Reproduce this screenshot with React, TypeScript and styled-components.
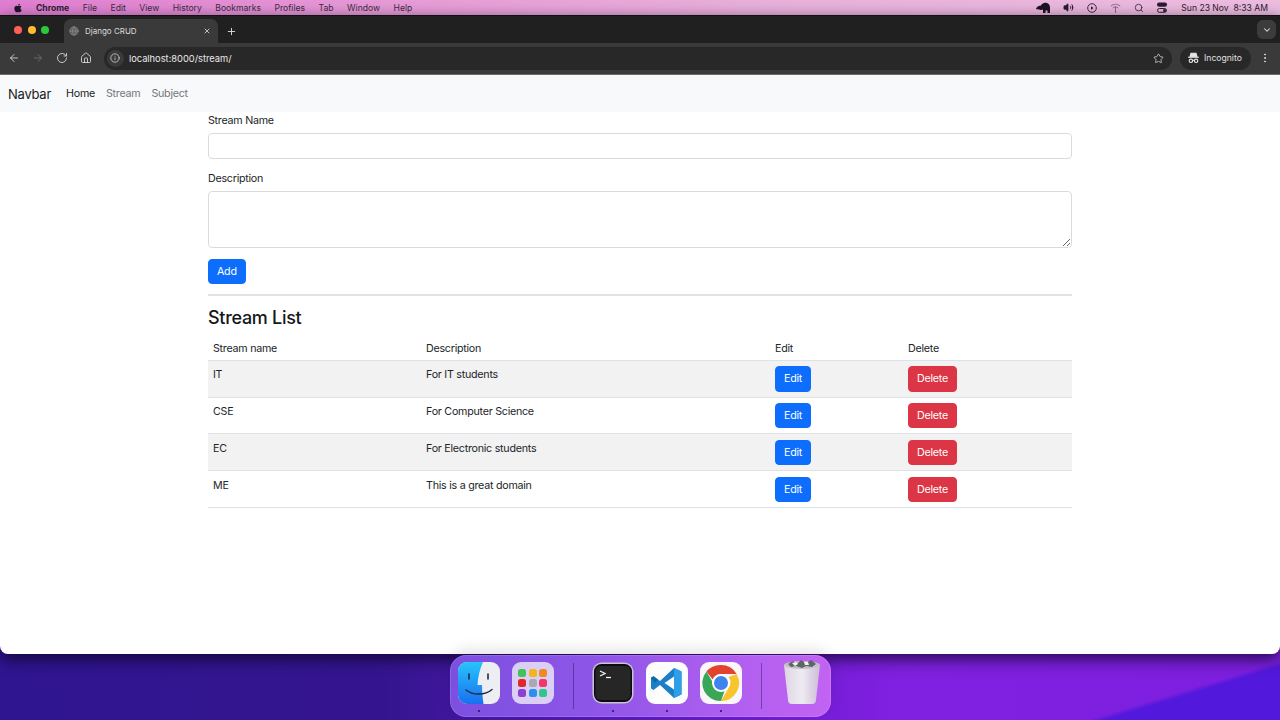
import styled, { createGlobalStyle } from "styled-components";
import {
  ArrowLeft,
  ArrowRight,
  ChevronDown,
  EllipsisVertical,
  Globe,
  House,
  Info,
  Plus,
  RotateCw,
  Search,
  Star,
  Volume2,
  X,
} from "lucide-react";
import { FaApple } from "react-icons/fa";

const MENU_ITEMS = ["File", "Edit", "View", "History", "Bookmarks", "Profiles", "Tab", "Window", "Help"];

const STREAMS = [
  { name: "IT", description: "For IT students" },
  { name: "CSE", description: "For Computer Science" },
  { name: "EC", description: "For Electronic students" },
  { name: "ME", description: "This is a great domain" },
];

const LAUNCH_COLORS = ["#3fc45a", "#f2b521", "#f08a24", "#e0282c", "#a9a9b4", "#f0386a", "#8f3fd0", "#2a8ff0", "#2cc88a"];

const Finder = () => (
  <svg width="42" height="42" viewBox="0 0 42 42">
    <defs>
      <linearGradient id="finderBlue" x1="0" y1="0" x2="0" y2="1">
        <stop offset="0" stopColor="#27c4fb" />
        <stop offset="1" stopColor="#1a6ff0" />
      </linearGradient>
    </defs>
    <rect width="42" height="42" rx="9" fill="#eceef2" />
    <path d="M9 0h16c-3 7-5 14-5.500 23h4.500c0 6 .5 12 1.500 19H9a9 9 0 0 1-9-9V9a9 9 0 0 1 9-9z" fill="url(#finderBlue)" />
    <path d="M11 12v5M30 12v5" stroke="#1d2a44" strokeWidth="1.6" strokeLinecap="round" />
    <path d="M8 28c7 5.500 19 5.500 26-.5" fill="none" stroke="#1d2a44" strokeWidth="1.5" strokeLinecap="round" />
  </svg>
);

const Terminal = () => (
  <svg width="42" height="42" viewBox="0 0 42 42">
    <rect x=".5" y=".5" width="41" height="41" rx="9" fill="#c9c3d3" />
    <rect x="2" y="2" width="38" height="38" rx="7.500" fill="#0c0c0e" />
    <rect x="3.500" y="4" width="35" height="34" rx="5" fill="#262626" />
    <path d="M8 9l5 2.500-5 2.500" fill="none" stroke="#f2f2f2" strokeWidth="1.300" />
    <path d="M14 15.500h5" stroke="#f2f2f2" strokeWidth="1.300" />
  </svg>
);

const VsCode = () => (
  <svg width="42" height="42" viewBox="0 0 42 42">
    <rect width="42" height="42" rx="9" fill="#fdfdfe" />
    <path d="M28 6l7.500 3.500v23L28 36 14 23l-6.500 5-2.500-1.500v-11L7.500 14l6.500 5z" fill="#1a7fc6" />
    <path d="M28 14.500L18.500 21l9.500 6.500z" fill="#fdfdfe" />
    <path d="M5 16l3-1.500L12 18l-3.500 3z" fill="#0f69a8" />
    <path d="M28 6l7.500 3.500v23L28 36z" fill="#2c9fe8" />
  </svg>
);

const Chrome = () => (
  <svg width="42" height="42" viewBox="0 0 42 42">
    <rect width="42" height="42" rx="9" fill="#fbf6fb" />
    <path d="M21 3a18 18 0 0 1 15.600 9H21a9 9 0 0 0-8.300 5.500L6.500 9.500A18 18 0 0 1 21 3z" fill="#e2432f" />
    <path d="M36.600 12A18 18 0 0 1 21 39l7.800-13.500A9 9 0 0 0 28.500 15z" fill="#f8c52f" />
    <path d="M21 39A18 18 0 0 1 6.500 9.500l7.800 13.500a9 9 0 0 0 10.200 6z" fill="#3aa757" />
    <circle cx="21" cy="21" r="9" fill="#fff" />
    <circle cx="21" cy="21" r="7" fill="#3f84ee" />
  </svg>
);

const Trash = () => (
  <svg width="38" height="46" viewBox="0 0 38 46">
    <defs>
      <linearGradient id="bin" x1="0" y1="0" x2="1" y2="0">
        <stop offset="0" stopColor="#dcd6e4" />
        <stop offset=".5" stopColor="#efebf2" />
        <stop offset="1" stopColor="#cbbcd8" />
      </linearGradient>
    </defs>
    <path d="M1 6h36l-4 35a4 4 0 0 1-4 4H9a4 4 0 0 1-4-4z" fill="url(#bin)" />
    <ellipse cx="19" cy="6" rx="18" ry="4" fill="#c4c0c6" />
    <path d="M5 5l5-3 4 3 4-4 5 3 5-3 5 4-4 3-6-1-4 2-6-2-5 1z" fill="#5f6668" />
    <path d="M9 4l4-1 2 2-3 2zM21 3l4 0 1 3-4 0z" fill="#f2f2f2" />
  </svg>
);

const Incognito = () => (
  <svg width="13" height="12" viewBox="0 0 13 12" fill="none" stroke="#e6e6e6" strokeWidth="1.100">
    <path d="M4 1.200h5l1 3.600H3z" fill="#e6e6e6" />
    <path d="M1 5.300h11" />
    <circle cx="3.900" cy="8.800" r="1.700" />
    <circle cx="9.100" cy="8.800" r="1.700" />
    <path d="M5.600 8.500c.6-.4 1.200-.4 1.800 0" />
  </svg>
);

const Elephant = () => (
  <svg width="14" height="12" viewBox="0 0 14 12" fill="#1c1422">
    <path d="M0 6.500C1 4.500 3 3.500 5 3.500 6 1.500 8 .5 10 .8c2.500.3 4 2.200 4 4.700V11h-2.500V8.500H9.500V11H7V7.500c-1 .5-2 .5-3 .2C3 7.500 2 7 .8 7.500z" />
  </svg>
);

const PlayCircle = () => (
  <svg width="10" height="10" viewBox="0 0 10 10" fill="none" stroke="#2a1c30" strokeWidth=".9">
    <circle cx="5" cy="5" r="4.300" />
    <path d="M4 3.200l2.600 1.800L4 6.800z" fill="#2a1c30" stroke="none" />
  </svg>
);

const Signal = () => (
  <svg width="11" height="10" viewBox="0 0 11 10" fill="none" stroke="#8a6a88" strokeWidth="1">
    <path d="M.8 3.200c3-2.500 6.400-2.500 9.400 0M2.800 5c1.800-1.300 3.600-1.300 5.400 0" />
    <path d="M5.500 3v7" />
  </svg>
);

const ControlCenter = () => (
  <svg width="10" height="11" viewBox="0 0 10 11" fill="#2a1c30">
    <rect x="0" y=".5" width="10" height="4.300" rx="2.100" />
    <rect x=".5" y="6.500" width="9" height="3.800" rx="1.900" fill="none" stroke="#2a1c30" />
    <circle cx="7.500" cy="8.400" r="1.500" />
  </svg>
);

export default function App() {
  return (
    <Page>
      <GlobalStyle />
      <MenuBar>
        <MenuLeft>
          <AppleMark>
            <FaApple size={10} color="#20162a" />
          </AppleMark>
          <AppName>Chrome</AppName>
          {MENU_ITEMS.map((item) => (
            <MenuItem key={item}>{item}</MenuItem>
          ))}
        </MenuLeft>
        <MenuRight>
          <Elephant />
          <Volume2 size={11} color="#2a1c30" fill="#2a1c30" strokeWidth={1.500} />
          <PlayCircle />
          <Signal />
          <Search size={10} color="#2a1c30" strokeWidth={1.800} />
          <ControlCenter />
          <Clock>Sun 23 Nov&nbsp; 8:33 AM</Clock>
        </MenuRight>
      </MenuBar>

      <Window>
        <TabStrip>
          <Lights>
            <Light $color="#ff5f57" />
            <Light $color="#febc2e" />
            <Light $color="#28c840" />
          </Lights>
          <Tab>
            <Globe size={10} color="#8a8a8a" fill="#5a5a5a" />
            <TabTitle>Django CRUD</TabTitle>
            <X size={8} color="#d8d8d8" strokeWidth={2.500} />
          </Tab>
          <NewTab>
            <Plus size={11} color="#dedede" strokeWidth={2} />
          </NewTab>
          <TabSearch>
            <ChevronDown size={10} color="#e0e0e0" strokeWidth={2.500} />
          </TabSearch>
        </TabStrip>

        <Toolbar>
          <NavIcons>
            <ArrowLeft size={12} color="#d6d6d6" strokeWidth={1.800} />
            <ArrowRight size={12} color="#6f6f6f" strokeWidth={1.800} />
            <RotateCw size={12} color="#d6d6d6" strokeWidth={1.800} />
            <House size={12} color="#d6d6d6" strokeWidth={1.800} />
          </NavIcons>
          <Omnibox>
            <InfoChip>
              <Info size={10} color="#e0e0e0" strokeWidth={1.800} />
            </InfoChip>
            <Url>localhost:8000/stream/</Url>
            <Star size={11} color="#e0e0e0" strokeWidth={1.600} />
          </Omnibox>
          <IncognitoPill>
            <Incognito />
            <span>Incognito</span>
          </IncognitoPill>
          <EllipsisVertical size={12} color="#e0e0e0" strokeWidth={2} />
        </Toolbar>

        <Viewport>
          <Navbar>
            <Brand>Navbar</Brand>
            <NavLink $active>Home</NavLink>
            <NavLink>Stream</NavLink>
            <NavLink>Subject</NavLink>
          </Navbar>

          <Container>
            <Label>Stream Name</Label>
            <TextInput />
            <Label $gap>Description</Label>
            <TextArea />
            <AddRow>
              <Button $color="#0d6efd">Add</Button>
            </AddRow>
            <Rule />
            <Heading>Stream List</Heading>
            <Table>
              <colgroup>
                <col width="213" />
                <col width="349" />
                <col width="133" />
                <col width="169" />
              </colgroup>
              <thead>
                <tr>
                  <HeadCell>Stream name</HeadCell>
                  <HeadCell>Description</HeadCell>
                  <HeadCell>Edit</HeadCell>
                  <HeadCell>Delete</HeadCell>
                </tr>
              </thead>
              <tbody>
                {STREAMS.map((stream, i) => (
                  <Row key={stream.name} $striped={i % 2 === 0}>
                    <Cell>{stream.name}</Cell>
                    <Cell>{stream.description}</Cell>
                    <Cell>
                      <Button $color="#0d6efd">Edit</Button>
                    </Cell>
                    <Cell>
                      <Button $color="#dc3545">Delete</Button>
                    </Cell>
                  </Row>
                ))}
              </tbody>
            </Table>
          </Container>
        </Viewport>
      </Window>

      <DockArea>
        <Dock>
          <DockItem $running>
            <Finder />
          </DockItem>
          <DockItem>
            <LaunchIcon>
              {LAUNCH_COLORS.map((color) => (
                <LaunchDot key={color} $color={color} />
              ))}
            </LaunchIcon>
          </DockItem>
          <Divider />
          <DockItem $running>
            <Terminal />
          </DockItem>
          <DockItem $running>
            <VsCode />
          </DockItem>
          <DockItem $running>
            <Chrome />
          </DockItem>
          <Divider />
          <TrashSlot>
            <Trash />
          </TrashSlot>
        </Dock>
      </DockArea>
    </Page>
  );
}

const GlobalStyle = createGlobalStyle`
  html, body {
    margin: 0;
    padding: 0;
    overflow: hidden;
  }

  * {
    box-sizing: border-box;
  }
`;

const Page = styled.div`
  width: 1280px;
  height: 720px;
  display: flex;
  flex-direction: column;
  font-family: Inter, "Liberation Sans", sans-serif;
  background:
    linear-gradient(163deg, transparent 94.7%, #5218dc 95.2%),
    linear-gradient(90deg, #2f1590 0%, #35158f 30%, #6a1cd0 58%, #8020e0 70%, #7d1fdf 100%);
`;

const MenuBar = styled.header`
  height: 15px;
  flex-shrink: 0;
  display: flex;
  align-items: center;
  justify-content: space-between;
  padding: 0 12px 0 13px;
  background: linear-gradient(90deg, #e07ed0 0%, #e69ad6 30%, #e8b0da 60%, #ecbcdf 100%);
  color: #2a1c30;
  font-size: 8.600px;
`;

const MenuLeft = styled.div`
  display: flex;
  align-items: center;
  gap: 13.500px;
`;

const AppleMark = styled.span`
  display: flex;
  margin-right: -0.500px;
`;

const AppName = styled.span`
  font-weight: 700;
`;

const MenuItem = styled.span`
  color: #3c2c44;
`;

const MenuRight = styled.div`
  display: flex;
  align-items: center;
  gap: 13px;
`;

const Clock = styled.span`
  margin-left: 1px;
`;

const Window = styled.main`
  height: 639px;
  flex-shrink: 0;
  display: flex;
  flex-direction: column;
  border-radius: 0 0 8px 8px;
  overflow: hidden;
  position: relative;
  z-index: 1;
  box-shadow: 0 5px 16px rgba(10, 0, 30, 0.75);
`;

const TabStrip = styled.div`
  height: 28px;
  flex-shrink: 0;
  display: flex;
  align-items: flex-end;
  background: #202020;
  padding: 0 4px 0 14px;
  border-top: 1px solid #111;
`;

const Lights = styled.div`
  display: flex;
  gap: 5.500px;
  align-self: center;
  margin-right: 15px;
`;

const Light = styled.span<{ $color: string }>`
  width: 8px;
  height: 8px;
  border-radius: 50%;
  background: ${({ $color }) => $color};
`;

const Tab = styled.div`
  width: 154px;
  height: 24px;
  display: flex;
  align-items: center;
  gap: 6px;
  padding: 0 7px 0 5px;
  background: #3a3a3a;
  border-radius: 7px 7px 0 0;
`;

const TabTitle = styled.span`
  flex: 1;
  color: #dcdcdc;
  font-size: 8px;
`;

const NewTab = styled.div`
  display: flex;
  align-items: center;
  height: 24px;
  margin-left: 8px;
`;

const TabSearch = styled.div`
  width: 19px;
  height: 19px;
  display: flex;
  align-items: center;
  justify-content: center;
  margin: 0 0 4px auto;
  background: #3c3c3c;
  border-radius: 6px;
`;

const Toolbar = styled.div`
  height: 32px;
  flex-shrink: 0;
  display: flex;
  align-items: center;
  padding: 0 9px 1px 8px;
  background: #3a3a3a;
  border-bottom: 1px solid #6a6a6a;
`;

const NavIcons = styled.div`
  display: flex;
  align-items: center;
  gap: 12px;
  width: 96px;
`;

const Omnibox = styled.div`
  width: 1069px;
  height: 23px;
  display: flex;
  align-items: center;
  padding: 0 8px 0 3px;
  background: #282828;
  border-radius: 12px;
`;

const InfoChip = styled.span`
  width: 17px;
  height: 17px;
  display: flex;
  align-items: center;
  justify-content: center;
  border-radius: 50%;
  background: #3a3a3a;
`;

const Url = styled.span`
  flex: 1;
  margin-left: 5px;
  color: #e8e8e8;
  font-size: 9.300px;
`;

const IncognitoPill = styled.div`
  width: 71px;
  height: 23px;
  display: flex;
  align-items: center;
  gap: 4px;
  margin: 0 8px 0 8px;
  padding-left: 7px;
  background: #282828;
  border-radius: 12px;
  color: #e0e0e0;
  font-size: 8.600px;
`;

const Viewport = styled.div`
  flex: 1;
  min-height: 0;
  background: #fff;
  color: #212529;
  letter-spacing: -0.25px;
`;

const Navbar = styled.nav`
  height: 37px;
  display: flex;
  align-items: center;
  padding-left: 8px;
  background: #f8f9fa;
`;

const Brand = styled.span`
  font-size: 13px;
  color: #1a1c1f;
  margin-right: 15px;
`;

const NavLink = styled.span<{ $active?: boolean }>`
  font-size: 10.700px;
  margin-right: 11px;
  color: ${({ $active }) => ($active ? "#1a1c1f" : "#73767a")};
`;

const Container = styled.div`
  width: 864px;
  margin: 0 auto;
`;

const Label = styled.label<{ $gap?: boolean }>`
  display: block;
  height: 21px;
  margin-top: ${({ $gap }) => ($gap ? "11px" : "0")};
  padding-top: 1px;
  font-size: 10.700px;
  line-height: 16px;
`;

const TextInput = styled.input`
  display: block;
  width: 100%;
  height: 26px;
  background: #fff;
  border: 1px solid #d8dbde;
  border-radius: 4px;
`;

const TextArea = styled.textarea`
  display: block;
  width: 100%;
  height: 57px;
  background: #fff;
  border: 1px solid #d8dbde;
  border-radius: 4px;
`;

const AddRow = styled.div`
  margin-top: 11px;
  display: flex;
`;

const Button = styled.button<{ $color: string }>`
  display: block;
  height: 25.300px;
  padding: 0 8px;
  background: ${({ $color }) => $color};
  border: 1px solid ${({ $color }) => $color};
  border-radius: 4px;
  color: #fff;
  font-family: inherit;
  font-size: 10.700px;
  letter-spacing: -0.25px;
`;

const Rule = styled.hr`
  height: 2px;
  margin: 10px 0 0;
  border: 0;
  background: #e2e2e3;
`;

const Heading = styled.h3`
  margin: 11px 0 0;
  font-size: 18px;
  font-weight: 500;
  letter-spacing: -0.3px;
  line-height: 22px;
  color: #15171a;
`;

const Table = styled.table`
  width: 864px;
  margin-top: 8px;
  table-layout: fixed;
  border-collapse: collapse;
  font-size: 10.700px;
`;

const HeadCell = styled.th`
  height: 23px;
  padding: 0 5px;
  text-align: left;
  font-weight: 400;
  color: #212529;
  border-bottom: 1px solid #dee2e6;
`;

const Row = styled.tr<{ $striped: boolean }>`
  background: ${({ $striped }) => ($striped ? "#f2f2f2" : "#fff")};
`;

const Cell = styled.td`
  padding: 5.500px 5px 5px;
  vertical-align: top;
  line-height: 17px;
  border-bottom: 1px solid #dee2e6;
`;

const DockArea = styled.footer`
  flex: 1;
  display: flex;
  justify-content: center;
  padding-top: 1px;
  position: relative;
  z-index: 2;
`;

const Dock = styled.div`
  width: 381px;
  height: 62px;
  display: flex;
  align-items: flex-start;
  padding: 7px 0 0 8px;
  border-radius: 16px;
  background: linear-gradient(90deg, #7c4fe0 0%, #8f56e8 40%, #b05ff0 75%, #c263f2 100%);
  box-shadow: inset 0 0 0 1px rgba(255, 255, 255, 0.14), 0 -6px 14px rgba(0, 0, 0, 0.1);
`;

const DockItem = styled.div<{ $running?: boolean }>`
  width: 42px;
  height: 42px;
  margin-right: 12px;
  position: relative;

  &::after {
    content: "";
    display: ${({ $running }) => ($running ? "block" : "none")};
    position: absolute;
    left: 20px;
    bottom: -8px;
    width: 2.500px;
    height: 2.500px;
    border-radius: 50%;
    background: #1c1450;
  }
`;

const LaunchIcon = styled.div`
  width: 42px;
  height: 42px;
  display: grid;
  grid-template-columns: repeat(3, 8px);
  grid-auto-rows: 7.500px;
  gap: 2.700px;
  align-content: center;
  justify-content: center;
  border-radius: 9px;
  background: #dccff6;
`;

const LaunchDot = styled.span<{ $color: string }>`
  border-radius: 2.500px;
  background: ${({ $color }) => $color};
`;

const Divider = styled.span`
  width: 1px;
  height: 46px;
  margin: 1px 18px 0 7px;
  background: rgba(40, 20, 80, 0.45);
`;

const TrashSlot = styled.div`
  width: 38px;
  margin: -3px 0 0 3px;
`;
